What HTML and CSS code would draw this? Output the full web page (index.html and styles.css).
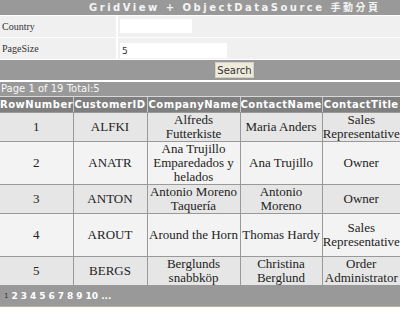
FILE: index.html
```html
<!DOCTYPE html>
<html lang="zh-Hant">
<head>
    <meta charset="UTF-8">
    <title>GridView + ObjectDataSource 手動分頁</title>
    <link rel="stylesheet" href="styles.css">
</head>
<body>
    <div class="title">GridView + ObjectDataSource 手動分頁</div>

    <div class="form">
        <div class="label">Country</div>
        <div class="field"><input class="txt country" type="text"></div>
        <div class="label">PageSize</div>
        <div class="field"><input class="txt size" type="text" value="5"></div>
    </div>

    <div class="actions">
        <button class="search-btn">Search</button>
    </div>

    <div class="info">Page 1 of 19 Total:5</div>

    <table class="grid">
        <colgroup>
            <col style="width:73px">
            <col style="width:74px">
            <col style="width:93px">
            <col style="width:82px">
            <col>
        </colgroup>
        <thead>
            <tr>
                <th>RowNumber</th>
                <th>CustomerID</th>
                <th>CompanyName</th>
                <th>ContactName</th>
                <th>ContactTitle</th>
            </tr>
        </thead>
        <tbody>
            <tr class="odd">
                <td>1</td><td>ALFKI</td><td>Alfreds Futterkiste</td><td>Maria Anders</td><td>Sales Representative</td>
            </tr>
            <tr class="even">
                <td>2</td><td>ANATR</td><td>Ana Trujillo Emparedados y helados</td><td>Ana Trujillo</td><td>Owner</td>
            </tr>
            <tr class="odd">
                <td>3</td><td>ANTON</td><td>Antonio Moreno Taquería</td><td>Antonio Moreno</td><td>Owner</td>
            </tr>
            <tr class="even">
                <td>4</td><td>AROUT</td><td>Around the Horn</td><td>Thomas Hardy</td><td>Sales Representative</td>
            </tr>
            <tr class="odd">
                <td>5</td><td>BERGS</td><td>Berglunds snabbköp</td><td>Christina Berglund</td><td>Order Administrator</td>
            </tr>
        </tbody>
    </table>

    <div class="pager">
        <span class="current">1</span>
        <a href="#">2</a>
        <a href="#">3</a>
        <a href="#">4</a>
        <a href="#">5</a>
        <a href="#">6</a>
        <a href="#">7</a>
        <a href="#">8</a>
        <a href="#">9</a>
        <a href="#">10</a>
        <a href="#">...</a>
    </div>
</body>
</html>
```

FILE: styles.css
```css
body {
    margin: 0;
    background: white;
    font-family: 'Liberation Serif', serif;
    color: #222;
}

.title {
    height: 15px;
    line-height: 15px;
    background: #999999;
    color: #f4f4f4;
    font-family: 'DejaVu Sans', 'Noto Sans CJK TC', sans-serif;
    font-size: 10px;
    font-weight: bold;
    letter-spacing: 2.5px;
    padding-left: 89px;
    white-space: nowrap;
    overflow: hidden;
}

.form {
    display: grid;
    grid-template-columns: 116px 1fr;
    gap: 1px 2px;
    margin-top: 1px;
}

.label,
.field {
    background: #f0f0f0;
    height: 21px;
    display: flex;
    align-items: center;
}

.label {
    font-size: 10px;
    color: #333;
    padding-left: 2px;
}

.field {
    padding-left: 2px;
}

.txt {
    border: none;
    background: white;
    height: 14px;
    padding: 0 2px;
    margin: 0;
    font-family: 'DejaVu Sans', sans-serif;
    font-size: 9px;
    color: #333;
    outline: none;
}

.country {
    width: 68px;
    margin-top: -2px;
}

.size {
    width: 103px;
    height: 15px;
    margin-top: 4px;
}

.actions {
    margin-top: 1px;
    height: 20px;
    background: #999999;
    display: flex;
    align-items: center;
    border-bottom: 2px solid white;
}

.search-btn {
    margin-left: 215px;
    width: 39px;
    height: 16px;
    padding: 0;
    background: #efebdc;
    border: 1px solid #d6d2c2;
    font-family: 'DejaVu Sans', sans-serif;
    font-size: 10px;
    color: #333;
}

.info {
    height: 14px;
    line-height: 14px;
    background: #999999;
    color: #f8f8f8;
    font-family: 'DejaVu Sans', sans-serif;
    font-size: 10px;
    padding-left: 1px;
    border-bottom: 1px solid #d8d8d8;
}

.grid {
    width: 400px;
    border-collapse: collapse;
    table-layout: fixed;
    font-size: 13px;
}

.grid th {
    height: 15px;
    padding: 0;
    background: #7f7f7f;
    color: white;
    font-family: 'DejaVu Sans', sans-serif;
    font-size: 10px;
    font-weight: bold;
    letter-spacing: 0.5px;
    white-space: nowrap;
    overflow: hidden;
    border-left: 1px solid #c8c8c8;
    border-bottom: 1px solid #999;
}

.grid th:first-child,
.grid td:first-child {
    border-left: none;
}

.grid td {
    height: 28px;
    padding: 0;
    line-height: 14px;
    text-align: center;
    color: #222;
    border-left: 1px solid #999;
    border-bottom: 1px solid #999;
}

.grid tr.even td {
    height: 42px;
}

.grid .odd {
    background: #e6e6e6;
}

.grid .even {
    background: #f3f3f3;
}

.pager {
    height: 20px;
    background: #999999;
    display: flex;
    align-items: center;
    gap: 3px;
    padding-left: 4px;
    border-bottom: 1px solid #b8b49a;
    font-family: 'DejaVu Sans', sans-serif;
    font-size: 9px;
    font-weight: bold;
}

.pager a {
    color: white;
    text-decoration: none;
}

.pager .current {
    font-size: 7px;
    font-weight: normal;
    color: #333;
}
```
